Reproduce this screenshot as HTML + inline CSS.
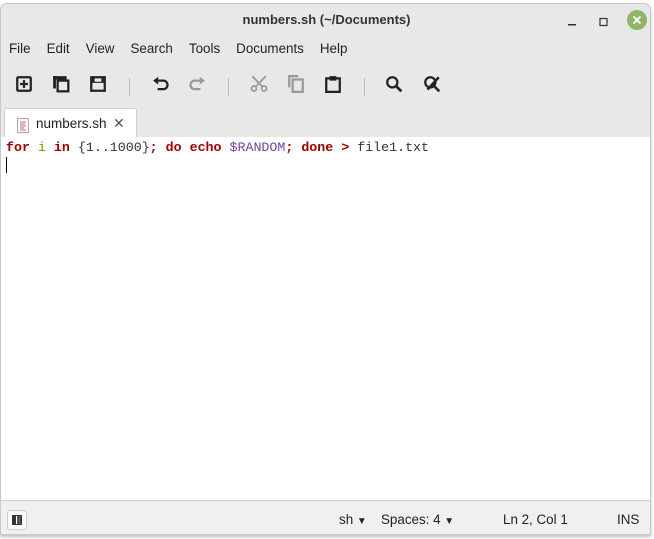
<!DOCTYPE html>
<html><head><meta charset="utf-8"><style>
*{margin:0;padding:0;box-sizing:border-box}
body{width:654px;height:539px;background:#fff;position:relative;overflow:hidden;font-family:"Liberation Sans",sans-serif;font-size:13.4px;color:#222}
.win{position:absolute;left:0;top:3px;width:651px;height:532px;background:#e8e8e8;border:1px solid #c8c8c8;border-radius:7px 7px 0 0;box-shadow:0 2px 3px rgba(0,0,0,.25);overflow:hidden}
.title{position:absolute;top:8px;left:0;width:651px;text-align:center;font-weight:bold;font-size:13px;color:#333}
.menu{position:absolute;top:37px;left:8px;display:flex}
.menu span{margin-right:16px}
.tb svg{position:absolute;top:71px}
.tabbar{position:absolute;top:104px;left:0;width:651px;height:33px;border-bottom:1px solid #d0d0d0}
.tab{position:absolute;left:3px;top:0;width:133px;height:33px;background:#fff;border:1px solid #d0d0d0;border-bottom:none;border-radius:3px 3px 0 0}
.editor{position:absolute;top:133px;left:0;width:651px;height:364px;background:#fff;border-bottom:1px solid #d0d0d0}
.code{position:absolute;left:5px;top:3px;font-family:"Liberation Mono",monospace;font-size:13.3px;white-space:pre;color:#333}
.k{color:#a00000;font-weight:bold}.v{color:#6a9a00}.s{color:#7a3e9d}
.status{position:absolute;top:497px;left:0;width:651px;height:35px;background:#f0f0f0}
</style></head><body>
<div class="win">
<div class="title">numbers.sh (~/Documents)</div>
<svg style="position:absolute;left:567px;top:12px" width="80" height="16">
<rect x="0" y="8" width="8" height="1.5" fill="#333"/>
<rect x="32" y="2.5" width="7" height="7" fill="none" stroke="#333" stroke-width="1.2"/>
</svg>
<svg style="position:absolute;left:625px;top:5px" width="22" height="22"><circle cx="11" cy="11" r="10" fill="#8fb46a"/><path d="M7.5 7.5l7 7M14.5 7.5l-7 7" stroke="#fff" stroke-width="1.8"/></svg>
<div class="menu"><span>File</span><span>Edit</span><span>View</span><span>Search</span><span>Tools</span><span>Documents</span><span>Help</span></div>
<div class="tb">
<svg style="left:14px" width="18" height="18" viewBox="0 0 16 16"><rect x="2" y="2" width="12" height="12" rx="1" fill="none" stroke="#222" stroke-width="2"/><path d="M8 4.5v7M4.5 8h7" stroke="#222" stroke-width="2"/></svg>
<svg style="left:51px" width="18" height="18" viewBox="0 0 16 16"><rect x="1" y="1" width="12" height="3" fill="#222"/><rect x="1" y="1" width="2.5" height="11" fill="#222"/><rect x="5" y="5" width="9.5" height="9.5" fill="none" stroke="#222" stroke-width="2"/></svg>
<svg style="left:88px" width="18" height="18" viewBox="0 0 16 16"><rect x="2" y="2" width="12" height="12" fill="none" stroke="#222" stroke-width="2"/><rect x="2" y="2" width="12" height="5" fill="#222"/><rect x="5" y="3" width="6" height="3" fill="#e8e8e8"/></svg>
<div style="position:absolute;left:128px;top:74px;width:1px;height:18px;background:#bbb"></div>
<svg style="left:151px" width="18" height="18" viewBox="0 0 16 16"><path d="M4 5h6a3.8 3.8 0 0 1 0 7.6H5" fill="none" stroke="#222" stroke-width="2"/><path d="M1 5l4.5-3.5v7z" fill="#222"/></svg>
<svg style="left:187px" width="18" height="18" viewBox="0 0 16 16"><path d="M12 5H6a3.8 3.8 0 0 0 0 7.6h5" fill="none" stroke="#999" stroke-width="2"/><path d="M15 5l-4.5-3.5v7z" fill="#999"/></svg>
<div style="position:absolute;left:227px;top:74px;width:1px;height:18px;background:#bbb"></div>
<svg style="left:249px" width="18" height="18" viewBox="0 0 16 16"><circle cx="3.5" cy="12" r="2.2" fill="none" stroke="#999" stroke-width="1.6"/><circle cx="12.5" cy="12" r="2.2" fill="none" stroke="#999" stroke-width="1.6"/><path d="M5 10.5L14 1M11 10.5L2 1" stroke="#999" stroke-width="1.6"/></svg>
<svg style="left:286px" width="18" height="18" viewBox="0 0 16 16"><path d="M2 11V1h8" fill="none" stroke="#999" stroke-width="2"/><rect x="5" y="4" width="9" height="11" fill="none" stroke="#999" stroke-width="2"/></svg>
<svg style="left:323px" width="18" height="18" viewBox="0 0 16 16"><rect x="2" y="3" width="12" height="12" fill="none" stroke="#222" stroke-width="2"/><rect x="5" y="1" width="6" height="4" fill="#222"/></svg>
<div style="position:absolute;left:363px;top:74px;width:1px;height:18px;background:#bbb"></div>
<svg style="left:384px" width="18" height="18" viewBox="0 0 16 16"><circle cx="6.5" cy="6.5" r="4.5" fill="none" stroke="#222" stroke-width="2"/><path d="M9.5 9.5l5 5" stroke="#222" stroke-width="2.5"/></svg>
<svg style="left:422px" width="18" height="18" viewBox="0 0 16 16"><circle cx="6.5" cy="6.5" r="4.5" fill="none" stroke="#222" stroke-width="2"/><path d="M9.5 9.5l5 5M4 13l10-11" stroke="#222" stroke-width="2.2"/></svg>
</div>
<div class="tabbar"><div class="tab">
<svg style="position:absolute;left:12px;top:9px" width="12" height="15"><rect x="0.5" y="0.5" width="11" height="14" fill="#fff" stroke="#aaa"/><path d="M3 4h6M3 6h5M3 8h6M3 10h4M3 12h6" stroke="#c66" stroke-width="1"/></svg>
<span style="position:absolute;left:31px;top:7px;font-size:13.5px">numbers.sh</span>
<span style="position:absolute;left:108px;top:6px;color:#555;font-size:14px">✕</span>
</div></div>
<div class="editor">
<div class="code"><span class="k">for</span> <span class="v">i</span> <span class="k">in</span> {1..1000}<span class="k">;</span> <span class="k">do</span> <span class="k">echo</span> <span class="s">$RANDOM</span><span class="k">;</span> <span class="k">done</span> <span class="k">&gt;</span> file1.txt</div>
<div style="position:absolute;left:5px;top:20px;width:1px;height:16px;background:#000"></div>
</div>
<div class="status">
<div style="position:absolute;left:6px;top:9px;width:20px;height:20px;border:1px solid #ccc;border-radius:3px;background:#fafafa"><div style="position:absolute;left:4px;top:4px;width:10px;height:10px;border:1.5px solid #333;background:linear-gradient(90deg,#333 0 3px,#fff 3px 4px,#555 4px)"></div></div>
<span style="position:absolute;left:338px;top:11px">sh <span style="font-size:10px">▼</span></span>
<span style="position:absolute;left:380px;top:11px">Spaces: 4 <span style="font-size:10px">▼</span></span>
<span style="position:absolute;left:502px;top:11px">Ln 2, Col 1</span>
<span style="position:absolute;left:616px;top:11px">INS</span>
</div>
</div>
</body></html>
